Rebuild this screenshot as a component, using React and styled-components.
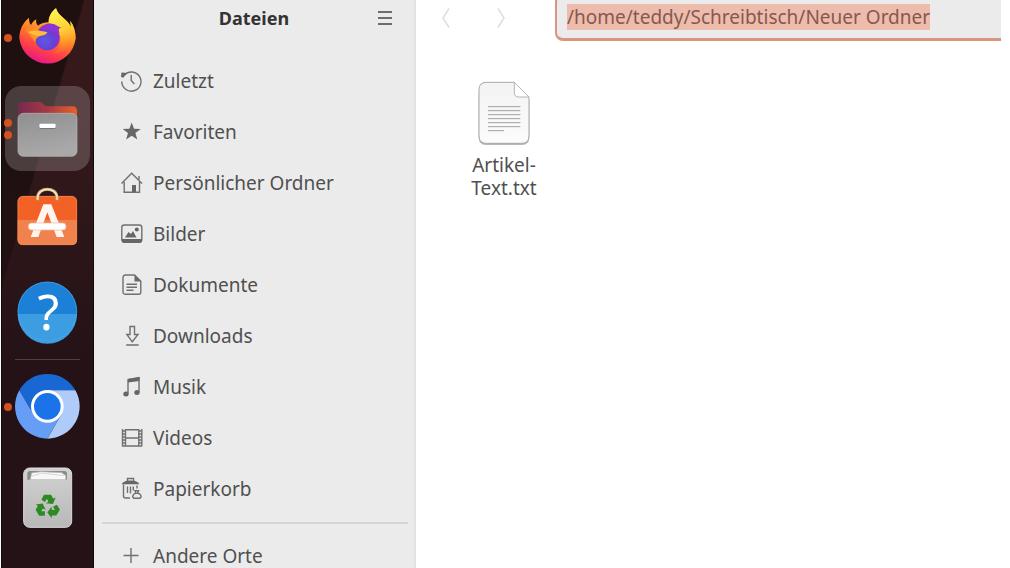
import React, { useEffect, useRef } from 'react'
import styled, { createGlobalStyle } from 'styled-components'

const places = [
  { id: 'recent', label: 'Zuletzt' },
  { id: 'starred', label: 'Favoriten' },
  { id: 'home', label: 'Persönlicher Ordner' },
  { id: 'pictures', label: 'Bilder' },
  { id: 'documents', label: 'Dokumente' },
  { id: 'downloads', label: 'Downloads' },
  { id: 'music', label: 'Musik' },
  { id: 'videos', label: 'Videos' },
  { id: 'trash', label: 'Papierkorb' },
]

const placeIcons = {
  recent: (
    <>
      <path d="M4.2 6.200A9.600 9.600 0 1 1 1.800 12.500" />
      <path d="M11.200 6v5.500l3.200 3.500" />
      <path className="fill" d="M1.500 3.500 7 4 3.200 8.800 1 8Z" />
    </>
  ),
  starred: (
    <path className="fill" d="m11.700 2.500 2.300 6.300 6.700.2-5.300 4.100 1.900 6.500-5.600-3.800-5.600 3.800 1.900-6.500-5.300-4.100 6.700-.2Z" />
  ),
  home: (
    <>
      <path d="M1.500 12.500 11.700 2.200 22 12.500M4.200 11v10.300h15.300V11M19 5v3.500" />
      <path className="fill" d="M12 14h4v7h-4z" />
    </>
  ),
  pictures: (
    <>
      <rect x="1.800" y="3" width="20" height="17" rx="2.500" />
      <path className="fill" d="M1.800 17h20v2a2 2 0 0 1-2 2h-16a2 2 0 0 1-2-2ZM5 15.500 8.500 10l2.500 2 2-3 3.500 6.500Z" />
      <circle className="fill" cx="16.800" cy="7.500" r="2" />
    </>
  ),
  documents: (
    <>
      <path d="M5.300 2H14.500l6.300 6.300v11a2 2 0 0 1-2 2H5.300a2.300 2.300 0 0 1-2.300-2.300v-14.700a2.300 2.300 0 0 1 2.300-2.300Z" />
      <path className="fill" d="M14.500 2 21 8.500h-6.500Z" />
      <path d="M6.500 11.200h10.500M6.500 14.200h10.500M6.500 17.200h7" />
    </>
  ),
  downloads: (
    <path d="M10 2.500h4.500v8h3.500L12.300 17.800 6.800 10.500H10ZM6.200 21h12.500" />
  ),
  music: (
    <>
      <path d="M8 18.500V4.500l11-2v14.500" />
      <path className="fill" d="M8 4 19.500 2v4L8 7.500Z" />
      <ellipse className="fill" cx="6" cy="19" rx="2.700" ry="2.500" />
      <ellipse className="fill" cx="17" cy="17.500" rx="2.700" ry="2.500" />
    </>
  ),
  videos: (
    <>
      <path d="M2.500 3v17.500M5.500 3v17.500M18.800 3v17.500M21.800 3v17.500M5.500 3.800h13.500M5.500 12h13.500M5.500 20h13.500" />
      <path d="M2.500 5h3M2.500 8h3M2.500 11h3M2.500 14h3M2.500 17h3M2.500 20h3M18.800 5h3M18.800 8h3M18.800 11h3M18.800 14h3M18.800 17h3M18.800 20h3" />
    </>
  ),
  trash: (
    <>
      <path className="fill" d="M1.500 7.300C3.500 4 6.800 3.500 10.500 3.500s7 .5 9 3.800Z" />
      <path d="M7.500 4V1.500h6V4M3.500 7.500v11.500a2 2 0 0 0 2 2H10M7.500 9.500v6.500M10.500 9.500v7M13.300 9.500v4M17 8.500v3" />
      <path d="M14 21.300c-3-2 0-5 2-5l-1-2.500h3.500l-1 2.500c2.500 0 5 3 2.500 5Z" />
    </>
  ),
  other: <path d="M11 4v15M3.500 11.500h15" />,
}

const dockApps = [
  { id: 'firefox', label: 'Firefox', windows: 1 },
  { id: 'files', label: 'Dateien', windows: 2, active: true },
  { id: 'software', label: 'Ubuntu Software', windows: 0 },
  { id: 'help', label: 'Hilfe', windows: 0 },
]

const dockExtras = [
  { id: 'chromium', label: 'Chromium', windows: 1 },
  { id: 'bin', label: 'Papierkorb', windows: 0 },
]

const recycleArrow = 'M-19-21-11-36H10L17-24 24-28 16-8-6-10 2-15-2-24-8-14Z'

const dockArt = {
  firefox: (
    <>
      <defs>
        <linearGradient id="ffBody" x1="0.75" y1="0" x2="0.35" y2="1">
          <stop offset="0" stopColor="#fff44f" />
          <stop offset="0.28" stopColor="#ffb52e" />
          <stop offset="0.52" stopColor="#ff7b25" />
          <stop offset="0.78" stopColor="#ff3c4c" />
          <stop offset="1" stopColor="#e5168b" />
        </linearGradient>
        <radialGradient id="ffGlobe" cx="0.4" cy="0.6" r="0.65">
          <stop offset="0" stopColor="#5a5be8" />
          <stop offset="0.6" stopColor="#6a3fd2" />
          <stop offset="1" stopColor="#8d2fd0" />
        </radialGradient>
        <linearGradient id="ffFlame" x1="0.3" y1="0" x2="0.6" y2="1">
          <stop offset="0" stopColor="#fff44f" />
          <stop offset="0.5" stopColor="#ffd036" />
          <stop offset="1" stopColor="#ff9226" stopOpacity="0" />
        </linearGradient>
        <linearGradient id="ffHead" x1="0" y1="0" x2="1" y2="0.3">
          <stop offset="0" stopColor="#ff7a2a" />
          <stop offset="1" stopColor="#ffa52b" />
        </linearGradient>
      </defs>
      <path
        fill="url(#ffBody)"
        d="M72 68C57 80 43 100 43 130A85 85 0 0 0 212 130C212 108 206 90 195 77C197 84 198 90 197 95C188 72 160 66 153 40C140 50 131 64 130 82C118 82 106 87 99 92C94 87 92 80 94 73C85 78 81 84 78 90C73 84 72 76 72 68Z"
      />
      <path
        fill="url(#ffFlame)"
        d="M153 40C140 50 131 64 132 84C150 88 163 100 165 122C171 146 160 166 146 174C184 176 212 152 212 128C211 108 206 90 195 77C197 84 198 90 197 95C188 72 160 66 153 40Z"
      />
      <circle cx="127" cy="129" r="37" fill="url(#ffGlobe)" />
      <path fill="#8c35d4" d="M101 105C112 84 140 80 156 92L169 99C159 99 160 106 164 114L150 112C136 104 118 105 101 105Z" />
      <path
        fill="url(#ffHead)"
        d="M60 108C68 88 86 88 99 92C96 98 98 103 104 107C112 109 121 109 127 112C124 121 112 122 104 124C97 126 91 132 91 142C82 132 76 118 60 108Z"
      />
      <path fill="#ffbf38" d="M68 111C84 104 104 108 127 112C120 120 110 119 101 123C90 122 80 118 68 111Z" />
    </>
  ),
  files: (
    <>
      <defs>
        <linearGradient id="folderBack" x1="0" y1="0" x2="1" y2="0">
          <stop offset="0" stopColor="#77294f" />
          <stop offset="0.5" stopColor="#a43a44" />
          <stop offset="1" stopColor="#e8602c" />
        </linearGradient>
        <linearGradient id="folderFront" x1="0" y1="0" x2="0.3" y2="1">
          <stop offset="0" stopColor="#8f8f8f" />
          <stop offset="1" stopColor="#a9a9a9" />
        </linearGradient>
      </defs>
      <path fill="url(#folderBack)" d="M39 62Q39 48 53 48H104Q110 48 114 54L118 58Q121 61 128 61H202Q216 61 216 75V140H39Z" />
      <rect x="39" y="82" width="177" height="129" rx="16" fill="url(#folderFront)" stroke="#b9b9b9" strokeWidth="2" />
      <rect x="103" y="116" width="49" height="13" rx="4" fill="#777" />
      <rect x="103" y="113" width="49" height="13" rx="4" fill="#fff" />
    </>
  ),
  software: (
    <>
      <rect x="38" y="57" width="178" height="147" rx="16" fill="#f26226" />
      <path fill="#f0824d" d="M38 129H216V188Q216 204 200 204H54Q38 204 38 188Z" />
      <rect x="39" y="58" width="176" height="145" rx="15" fill="none" stroke="#f58a55" strokeWidth="2" />
      <path d="M98 70V62C98 28 156 28 156 62V70" fill="none" stroke="#c7a67c" strokeWidth="9" />
      <path d="M98 68V62C98 29 156 29 156 62V68" fill="none" stroke="#f6dfb9" strokeWidth="5" />
      <path fill="#fff4ee" d="M115 82H139L178 180H155L127 106 100 180H77Z" />
      <rect x="70" y="138" width="113" height="21" rx="10" fill="#fff" stroke="#f3b79b" strokeWidth="2" />
    </>
  ),
  help: (
    <>
      <circle cx="127" cy="130" r="89" fill="#1c80d6" />
      <path fill="#3c9de2" d="M38 138H216A89 89 0 0 1 38 138Z" />
      <circle cx="127" cy="130" r="88" fill="none" stroke="#4aa9ea" strokeWidth="2" />
      <text x="130" y="185" textAnchor="middle" fontFamily="Noto Sans, sans-serif" fontSize="150" fill="#fff">?</text>
    </>
  ),
  chromium: (
    <>
      <path fill="#1967d2" d="M43 78.500A97 97 0 0 1 211 78.500H127L85 151Z" />
      <path fill="#aecbfa" d="M211 78.500A97 97 0 0 1 127 224L169 151 127 78.500Z" />
      <path fill="#669df6" d="M127 224A97 97 0 0 1 43 78.500L85 151H169Z" />
      <circle cx="127" cy="127" r="49" fill="#fff" />
      <circle cx="127" cy="127" r="40" fill="#1a73e8" />
    </>
  ),
  bin: (
    <>
      <defs>
        <linearGradient id="binBody" x1="0" y1="0" x2="0" y2="1">
          <stop offset="0" stopColor="#d2d2d2" />
          <stop offset="1" stopColor="#b8b8b8" />
        </linearGradient>
      </defs>
      <rect x="56" y="39" width="144" height="178" rx="18" fill="url(#binBody)" stroke="#dcdcdc" strokeWidth="3" />
      <path fill="#8b8b8b" d="M67 56Q67 48 75 48H178Q186 48 186 56V74H67Z" />
      <path fill="#f7f7f7" stroke="#bcbcbc" strokeWidth="2" d="M76 74 80 54 108 50 170 53 182 62V74Z" />
      <path fill="none" stroke="#c4c4c4" strokeWidth="2" d="M80 64 110 54 176 62" />
      <g transform="translate(128 155)" fill="#2b8a22">
        <path d={recycleArrow} />
        <path d={recycleArrow} transform="rotate(120)" />
        <path d={recycleArrow} transform="rotate(240)" />
      </g>
    </>
  ),
}

function DockItem({ app }) {
  return (
    <DockButton type="button" aria-label={app.label} $active={app.active}>
      <svg viewBox="0 0 255 255" width="85" height="85" aria-hidden="true">{dockArt[app.id]}</svg>
      {app.windows > 0 && (
        <Dots>
          {Array.from({ length: app.windows }).map((_, index) => <Dot key={index} />)}
        </Dots>
      )}
    </DockButton>
  )
}

function Place({ id, label }) {
  return (
    <li>
      <PlaceLink href={`#${id}`}>
        <PlaceIcon viewBox="0 0 24 24" aria-hidden="true">{placeIcons[id]}</PlaceIcon>
        {label}
      </PlaceLink>
    </li>
  )
}

function App() {
  const pathRef = useRef(null)

  useEffect(() => {
    pathRef.current.focus()
    pathRef.current.select()
  }, [])

  return (
    <Desktop>
      <GlobalStyle />
      <Dock aria-label="Dock">
        {dockApps.map((app) => <DockItem key={app.id} app={app} />)}
        <DockLine />
        {dockExtras.map((app) => <DockItem key={app.id} app={app} />)}
      </Dock>

      <Sidebar>
        <SidebarHead>
          <Title>Dateien</Title>
          <IconButton type="button" aria-label="Menü">
            <svg width="14" height="14" viewBox="0 0 14 14" stroke="#444" strokeWidth="1.500">
              <path d="M0 1h14M0 7h14M0 13h14" />
            </svg>
          </IconButton>
        </SidebarHead>
        <PlaceList>
          {places.map((place) => <Place key={place.id} {...place} />)}
        </PlaceList>
        <SidebarLine />
        <PlaceList>
          <Place id="other" label="Andere Orte" />
        </PlaceList>
      </Sidebar>

      <Content>
        <Toolbar>
          <NavButtons>
            <IconButton type="button" aria-label="Zurück">
              <svg width="8" height="20" viewBox="0 0 8 20" fill="none" stroke="#dedede" strokeWidth="1.500">
                <path d="M7 0.500 1 10l6 9.500" />
              </svg>
            </IconButton>
            <IconButton type="button" aria-label="Vor">
              <svg width="8" height="20" viewBox="0 0 8 20" fill="none" stroke="#dedede" strokeWidth="1.500">
                <path d="m1 0.500 6 9.500-6 9.500" />
              </svg>
            </IconButton>
          </NavButtons>
          <PathInput
            ref={pathRef}
            aria-label="Pfad"
            spellCheck={false}
            defaultValue="/home/teddy/Schreibtisch/Neuer Ordner"
          />
        </Toolbar>
        <FileGrid>
          <FileButton type="button">
            <svg width="56" height="66" viewBox="0 0 168 198" aria-hidden="true">
              <defs>
                <linearGradient id="paper" x1="0" y1="0" x2="0" y2="1">
                  <stop offset="0" stopColor="#f3f3f3" />
                  <stop offset="1" stopColor="#fcfcfc" />
                </linearGradient>
              </defs>
              <path fill="#888" opacity="0.600" d="M8 40V172Q8 195 30 195H138Q160 195 160 172V60Z" />
              <path fill="url(#paper)" stroke="#a8a8a8" strokeWidth="3" d="M31 7H115L159 51V168Q159 190 137 190H31Q9 190 9 168V29Q9 7 31 7Z" />
              <path fill="#fff" stroke="#b4b4b4" strokeWidth="3" d="M115 7V38Q115 51 128 51H159Z" />
              <path stroke="#a2a2a2" strokeWidth="3" d="M36 80H133M36 92H133M36 104H133M36 116H133M36 128H133M36 140H133M36 152H84" />
            </svg>
            <FileName>Artikel-<br />Text.txt</FileName>
          </FileButton>
        </FileGrid>
      </Content>
    </Desktop>
  )
}

export default App

const GlobalStyle = createGlobalStyle`
  * {
    box-sizing: border-box;
  }
  body {
    margin: 0;
    background: #fff;
    color: #505050;
    font-family: "Noto Sans", "Open Sans", sans-serif;
    font-size: 19px;
    overflow: hidden;
  }
  button {
    border: 0;
    padding: 0;
    background: none;
    color: inherit;
    font: inherit;
    cursor: pointer;
  }
  svg {
    display: block;
  }
`

const Desktop = styled.div`
  display: flex;
  height: 100vh;
  padding: 0 9px 0 1px;
  overflow: hidden;
`

const Dock = styled.nav`
  flex: none;
  display: flex;
  flex-direction: column;
  width: 93px;
  padding-left: 3px;
  overflow: hidden;
  border: solid #120809;
  border-width: 0 1px;
  background:
    linear-gradient(180deg, rgba(36, 18, 23, 0) 20%, #241217 65%),
    linear-gradient(106deg, #1e100f 78px, #35191b 80px);
`

const DockButton = styled.button`
  position: relative;
  flex: none;
  width: 85px;
  height: 85px;
  margin-bottom: 6px;
  border-radius: 16px;
  background: ${({ $active }) => ($active ? 'rgba(255, 255, 255, 0.19)' : 'none')};

  &:first-child {
    margin-top: -5px;
  }
`

const Dots = styled.span`
  position: absolute;
  top: 0;
  bottom: 0;
  left: -1px;
  display: flex;
  flex-direction: column;
  justify-content: center;
  gap: 4px;
`

const Dot = styled.span`
  width: 8px;
  height: 8px;
  border-radius: 50%;
  background: #d5511f;
`

const DockLine = styled.hr`
  flex: none;
  width: 65px;
  height: 1px;
  margin: 0 0 4px 10px;
  border: 0;
  background: #4d4042;
`

const Sidebar = styled.aside`
  flex: none;
  width: 322px;
  overflow: hidden;
  border-right: 2px solid #e2e2e2;
  background: #ebebeb;
`

const SidebarHead = styled.header`
  display: grid;
  grid-template-columns: 1fr auto 1fr;
  align-items: center;
  height: 35px;
  margin-bottom: 20px;
  padding: 0 22px;

  button {
    justify-self: end;
  }
`

const Title = styled.h1`
  grid-column: 2;
  margin: 0;
  color: #333;
  font-size: 18px;
  font-weight: 700;
`

const IconButton = styled.button`
  display: flex;
  align-items: center;
  justify-content: center;
`

const PlaceList = styled.ul`
  margin: 0;
  padding: 0;
  list-style: none;
`

const PlaceLink = styled.a`
  display: flex;
  align-items: center;
  gap: 9px;
  height: 51px;
  padding-left: 26px;
  color: inherit;
  text-decoration: none;
`

const PlaceIcon = styled.svg`
  flex: none;
  width: 24px;
  height: 24px;
  fill: none;
  stroke: #707070;
  stroke-width: 1.4;

  .fill {
    fill: #666;
    stroke: none;
  }
`

const SidebarLine = styled.hr`
  height: 2px;
  margin: 8px 6px 6px 8px;
  border: 0;
  background: #d6d6d6;
`

const Content = styled.main`
  flex: 1;
  min-width: 0;
  overflow: hidden;
  background: #fff;
`

const Toolbar = styled.header`
  display: flex;
  align-items: center;
  height: 47px;
  margin-top: -6px;
`

const NavButtons = styled.div`
  flex: none;
  display: flex;
  justify-content: space-between;
  width: 139px;
  padding: 0 50px 0 26px;
`

const PathInput = styled.input`
  flex: 1;
  min-width: 0;
  height: 47px;
  padding: 0 10px;
  border: solid #d9957f;
  border-width: 2px 0 3px 2px;
  border-radius: 8px 0 0 8px;
  outline: 0;
  background: #ebebeb;
  color: #505050;
  font: inherit;

  &::selection {
    background: #edbcad;
    color: #85594c;
  }
`

const FileGrid = styled.div`
  display: flex;
  padding: 39px 48px;
`

const FileButton = styled.button`
  display: flex;
  flex-direction: column;
  align-items: center;
  width: 80px;
`

const FileName = styled.span`
  margin-top: 8px;
  line-height: 23px;
  text-align: center;
`
